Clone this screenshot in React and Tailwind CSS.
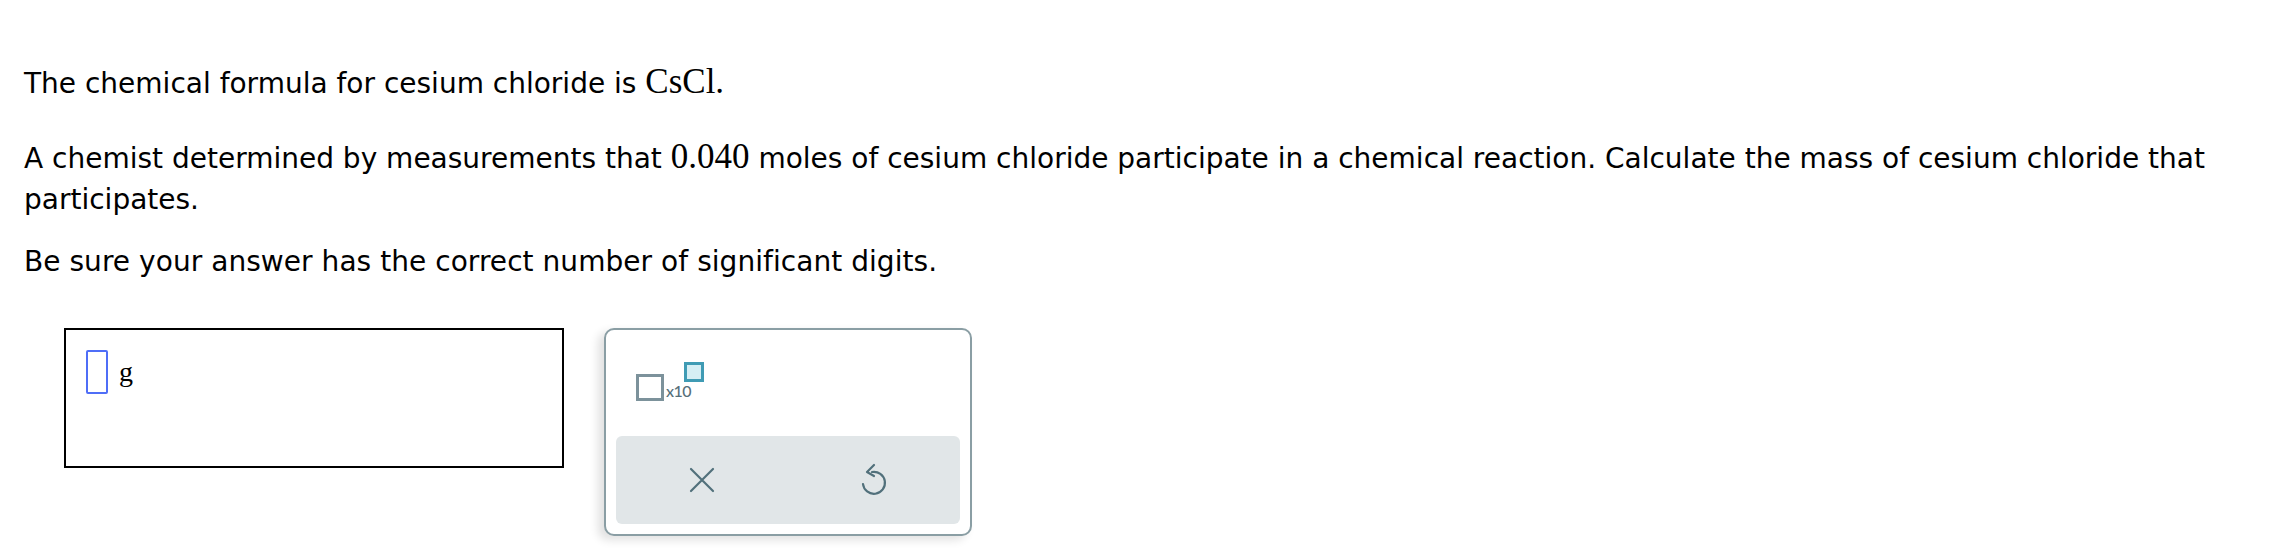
export default function App() {
  return (
    <div className="w-[2272px] h-[548px] bg-white text-black pt-[63px] px-[24px] font-['DejaVu_Sans',sans-serif] text-[28px] leading-[41px]">
      <p>
        The chemical formula for cesium chloride is{" "}
        <span className="font-['Liberation_Serif',serif] text-[35px] leading-[0]">CsCl.</span>
      </p>
      <p className="mt-[34px]">
        A chemist determined by measurements that{" "}
        <span className="font-['Liberation_Serif',serif] text-[35px] leading-[0]">0.040</span>{" "}
        moles of cesium chloride participate in a chemical reaction. Calculate the mass of cesium chloride that participates.
      </p>
      <p className="mt-[21px] tracking-[0.05px]">Be sure your answer has the correct number of significant digits.</p>
      <div className="mt-[46px] ml-[40px] flex items-start gap-[40px]">
        <div className="w-[500px] h-[140px] border-2 border-black flex items-start pt-[20px] pl-[20px]">
          <div className="w-[22px] h-[44px] border-2 border-[#4f6ef7] rounded-[2px]" />
          <span className="ml-[11px] mt-[4px] font-['Liberation_Serif',serif] text-[28px] leading-[36px]">g</span>
        </div>
        <div className="w-[368px] h-[208px] border-2 border-[#8a9ea4] rounded-[10px] bg-white shadow-[-6px_4px_10px_rgba(0,0,0,0.12)] flex flex-col px-[10px] pb-[10px]">
          <div className="flex-1 relative">
            <div className="absolute left-[20px] top-[44px] w-[28px] h-[27px] border-[3px] border-[#7c929b]" />
            <span className="absolute left-[50px] top-[51px] text-[16px] leading-[20px] text-[#56707a] font-medium font-['Lato',sans-serif] tracking-[-0.5px]">x10</span>
            <div className="absolute left-[68px] top-[32px] w-[20px] h-[20px] border-[3px] border-[#3f9bb4] bg-[#d5eef4]" />
          </div>
          <div className="h-[88px] bg-[#e1e6e8] rounded-[6px] flex items-center">
            <div className="w-1/2 flex justify-center">
              <svg width="26" height="26" viewBox="0 0 26 26" fill="none" stroke="#51707b" strokeWidth="2.2" strokeLinecap="round">
                <path d="M2 2 L24 24 M24 2 L2 24" />
              </svg>
            </div>
            <div className="w-1/2 flex justify-center">
              <svg width="28" height="34" viewBox="0 0 28 34" fill="none" stroke="#51707b" strokeWidth="2.2" strokeLinecap="round" strokeLinejoin="round">
                <path d="M12 9 A11 11 0 1 1 3 21" />
                <path d="M14 2 L7 9 L14 13" />
              </svg>
            </div>
          </div>
        </div>
      </div>
    </div>
  );
}
